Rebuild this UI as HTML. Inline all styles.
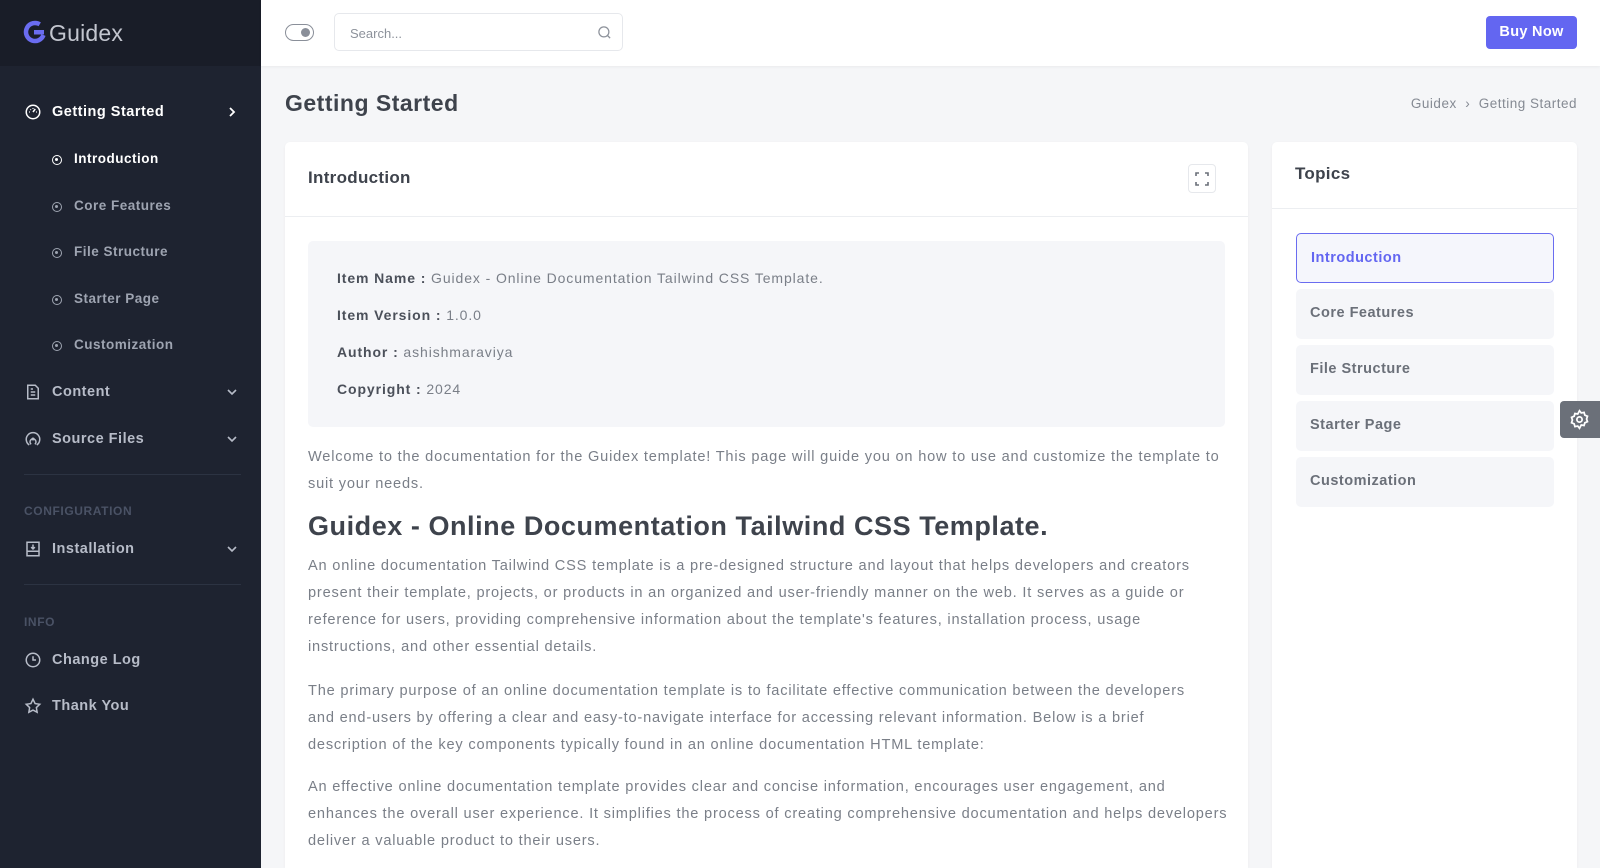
<!DOCTYPE html>
<html><head><meta charset="utf-8"><style>
*{box-sizing:border-box;margin:0;padding:0}
html{width:1600px;height:868px;overflow:hidden}
body{width:1600px;height:868px;overflow:hidden;background:#f5f6f8;font-family:"Liberation Sans",sans-serif;position:relative}
.sb{position:absolute;left:0;top:0;width:261px;height:868px;background:#1e2330}
.logo{height:66px;background:#191d28;position:relative}
.logo span{position:absolute;left:49px;top:20px;font-size:23px;color:#c3c6cf;letter-spacing:.2px}
.ni{position:absolute;left:24px;font-size:14.5px;color:#b7bcc8;font-weight:bold;white-space:nowrap;letter-spacing:.5px}
.ni svg{position:absolute;left:0;top:-1px}
.ni b{position:absolute;left:28px;top:0}
.sub{position:absolute;left:52px;font-size:13.5px;color:#9ea4b1;font-weight:bold;letter-spacing:.5px}
.sub i{position:absolute;left:0;top:4px;width:10px;height:10px;border:1.5px solid currentColor;border-radius:50%}
.sub i:after{content:"";position:absolute;left:2px;top:2px;width:3px;height:3px;background:currentColor;border-radius:50%}
.sub b{margin-left:22px}
.chev{position:absolute;left:226px}
.sec{position:absolute;left:24px;font-size:12px;color:#4a5265;font-weight:bold;letter-spacing:.6px}
.hr{position:absolute;left:24px;width:217px;height:1px;background:#2c3342}
.top{position:absolute;left:261px;top:0;right:0;height:66px;background:#fff;box-shadow:0 1px 3px rgba(0,0,0,.05)}
.card{position:absolute;background:#fff;border-radius:5px 5px 0 0;box-shadow:0 1px 3px rgba(0,0,0,.04)}
p.t{position:absolute;left:308px;font-size:14.6px;color:#7a7f88;line-height:27px;white-space:nowrap;letter-spacing:.8px}
.info{position:absolute;left:308px;top:241px;width:917px;height:186px;background:#f5f6f9;border-radius:5px}
.info div{position:absolute;left:29px;font-size:14px;color:#7a7f88;letter-spacing:.9px;white-space:nowrap}
.info b{color:#4b505a}
.tp{position:absolute;left:1296px;width:258px;height:50px;background:#f5f6f9;border-radius:5px;font-size:14.5px;font-weight:bold;color:#6b7079;padding:16px 14px;letter-spacing:.5px}
</style></head><body>
<div class="sb">
<div class="logo">
<svg style="position:absolute;left:23px;top:20px" width="24" height="24" viewBox="0 0 24 24"><circle cx="12" cy="12" r="9" fill="none" stroke="#6a6cf0" stroke-width="4.5" stroke-dasharray="44 13" transform="rotate(20 12 12)"/><rect x="11" y="10" width="10" height="4.5" fill="#6a6cf0"/></svg>
<span>Guidex</span></div>
<div class="ni" style="top:104px;color:#fff"><svg width="18" height="18" viewBox="0 0 24 24" fill="none" stroke="#fff" stroke-width="2"><circle cx="12" cy="12" r="9"/><path d="M12 12l3-4M7 12h1M16 12h1M12 7v1M8.5 8.5l.7.7"/></svg><b>Getting Started</b></div>
<svg class="chev" style="top:106px" width="12" height="12" viewBox="0 0 12 12" fill="none" stroke="#fff" stroke-width="1.8"><path d="M4 2l4 4-4 4"/></svg>
<div class="sub" style="top:151px;color:#fff"><i></i><b>Introduction</b></div>
<div class="sub" style="top:198px"><i></i><b>Core Features</b></div>
<div class="sub" style="top:244px"><i></i><b>File Structure</b></div>
<div class="sub" style="top:291px"><i></i><b>Starter Page</b></div>
<div class="sub" style="top:337px"><i></i><b>Customization</b></div>
<div class="ni" style="top:384px"><svg width="18" height="18" viewBox="0 0 24 24" fill="none" stroke="#b7bcc8" stroke-width="2"><path d="M5 3h10l4 4v14H5z M9 12h6M9 16h6M9 8h3"/></svg><b>Content</b></div>
<svg class="chev" style="top:386px" width="12" height="12" viewBox="0 0 12 12" fill="none" stroke="#b7bcc8" stroke-width="1.6"><path d="M2 4l4 4 4-4"/></svg>
<div class="ni" style="top:431px"><svg width="18" height="18" viewBox="0 0 24 24" fill="none" stroke="#b7bcc8" stroke-width="2"><path d="M7 20A9 9 0 1 1 17 20M9.5 19a4 4 0 1 1 5 0"/><circle cx="12" cy="12" r="1"/></svg><b>Source Files</b></div>
<svg class="chev" style="top:433px" width="12" height="12" viewBox="0 0 12 12" fill="none" stroke="#b7bcc8" stroke-width="1.6"><path d="M2 4l4 4 4-4"/></svg>
<div class="hr" style="top:474px"></div>
<div class="sec" style="top:504px">CONFIGURATION</div>
<div class="ni" style="top:541px"><svg width="18" height="18" viewBox="0 0 24 24" fill="none" stroke="#b7bcc8" stroke-width="2"><path d="M4 3h16v18H4zM4 15h16M12 6v6M9.5 9.5L12 12l2.5-2.5"/></svg><b>Installation</b></div>
<svg class="chev" style="top:543px" width="12" height="12" viewBox="0 0 12 12" fill="none" stroke="#b7bcc8" stroke-width="1.6"><path d="M2 4l4 4 4-4"/></svg>
<div class="hr" style="top:584px"></div>
<div class="sec" style="top:615px">INFO</div>
<div class="ni" style="top:652px"><svg width="18" height="18" viewBox="0 0 24 24" fill="none" stroke="#b7bcc8" stroke-width="2"><circle cx="12" cy="12" r="9"/><path d="M12 7v5h4"/></svg><b>Change Log</b></div>
<div class="ni" style="top:698px"><svg width="18" height="18" viewBox="0 0 24 24" fill="none" stroke="#b7bcc8" stroke-width="2"><path d="M12 3l2.8 5.8 6.2.9-4.5 4.4 1 6.2L12 17.4 6.5 20.3l1-6.2L3 9.7l6.2-.9z"/></svg><b>Thank You</b></div>
</div>
<div class="top">
<div style="position:absolute;left:24px;top:24px;width:29px;height:17px;border:1.5px solid #8a8f99;border-radius:9px"><div style="position:absolute;right:3px;top:2.5px;width:9px;height:9px;border-radius:50%;background:#8a8f99"></div></div>
<div style="position:absolute;left:73px;top:13px;width:289px;height:38px;border:1px solid #e6e8ec;border-radius:5px"><span style="position:absolute;left:15px;top:12px;font-size:13px;color:#8d929b">Search...</span>
<svg style="position:absolute;right:10px;top:11px" width="15" height="15" viewBox="0 0 24 24" fill="none" stroke="#8d929b" stroke-width="2"><circle cx="11" cy="11" r="8"/><path d="M17 17l4 4"/></svg></div>
<div style="position:absolute;left:1225px;top:16px;width:91px;height:33px;background:#6366f1;border-radius:4px;color:#fff;font-size:14.5px;font-weight:bold;text-align:center;line-height:33px;letter-spacing:.3px">Buy Now</div>
</div>
<div style="position:absolute;left:285px;top:90px;font-size:23px;font-weight:bold;color:#3e434c;letter-spacing:.5px">Getting Started</div>
<div style="position:absolute;right:23px;top:96px;font-size:13.5px;color:#858a93;letter-spacing:.5px">Guidex &nbsp;›&nbsp; Getting Started</div>
<div class="card" style="left:285px;top:142px;width:963px;height:726px">
<div style="position:absolute;left:23px;top:26px;font-size:17px;font-weight:bold;color:#3e434c;letter-spacing:.3px">Introduction</div>
<div style="position:absolute;left:903px;top:22px;width:28px;height:29px;border:1px solid #e6e8ec;border-radius:4px"><svg style="position:absolute;left:6px;top:7px" width="14" height="14" viewBox="0 0 14 14" fill="none" stroke="#6b7079" stroke-width="1.6"><path d="M1 4V1h3M10 1h3v3M13 10v3h-3M4 13H1v-3"/></svg></div>
<div style="position:absolute;left:0;top:74px;width:963px;height:1px;background:#eceef1"></div>
</div>
<div class="info">
<div style="top:29px"><b>Item Name :</b> Guidex - Online Documentation Tailwind CSS Template.</div>
<div style="top:66px"><b>Item Version :</b> 1.0.0</div>
<div style="top:103px"><b>Author :</b> ashishmaraviya</div>
<div style="top:140px"><b>Copyright :</b> 2024</div>
</div>
<p class="t" style="top:444px">Welcome to the documentation for the Guidex template! This page will guide you on how to use and customize the template to<br>suit your needs.</p>
<div style="position:absolute;left:308px;top:511px;font-size:27px;font-weight:bold;color:#3e434c;white-space:nowrap;letter-spacing:.55px">Guidex - Online Documentation Tailwind CSS Template.</div>
<p class="t" style="top:553px">An online documentation Tailwind CSS template is a pre-designed structure and layout that helps developers and creators<br>present their template, projects, or products in an organized and user-friendly manner on the web. It serves as a guide or<br>reference for users, providing comprehensive information about the template's features, installation process, usage<br>instructions, and other essential details.</p>
<p class="t" style="top:678px">The primary purpose of an online documentation template is to facilitate effective communication between the developers<br>and end-users by offering a clear and easy-to-navigate interface for accessing relevant information. Below is a brief<br>description of the key components typically found in an online documentation HTML template:</p>
<p class="t" style="top:774px">An effective online documentation template provides clear and concise information, encourages user engagement, and<br>enhances the overall user experience. It simplifies the process of creating comprehensive documentation and helps developers<br>deliver a valuable product to their users.</p>
<div class="card" style="left:1272px;top:142px;width:305px;height:726px">
<div style="position:absolute;left:23px;top:22px;font-size:17px;font-weight:bold;color:#3e434c;letter-spacing:.3px">Topics</div>
<div style="position:absolute;left:0;top:66px;width:305px;height:1px;background:#eceef1"></div>
</div>
<div class="tp" style="top:233px;background:#f5f6fc;border:1.5px solid #6a6cf0;color:#6366f1">Introduction</div>
<div class="tp" style="top:289px">Core Features</div>
<div class="tp" style="top:345px">File Structure</div>
<div class="tp" style="top:401px">Starter Page</div>
<div class="tp" style="top:457px">Customization</div>
<div style="position:absolute;left:1560px;top:401px;width:40px;height:37px;background:#6b7079;border-radius:4px 0 0 4px"><svg style="position:absolute;left:9px;top:8px" width="21" height="21" viewBox="0 0 24 24" fill="none" stroke="#fff" stroke-width="2"><circle cx="12" cy="12" r="3"/><path d="M12 2l2 2.5 3.2-.6.9 3.1 3 1.3-1 3.1 1 3.1-3 1.3-.9 3.1-3.2-.6L12 22l-2-2.5-3.2.6-.9-3.1-3-1.3 1-3.1-1-3.1 3-1.3.9-3.1 3.2.6z"/></svg></div>
</body></html>
